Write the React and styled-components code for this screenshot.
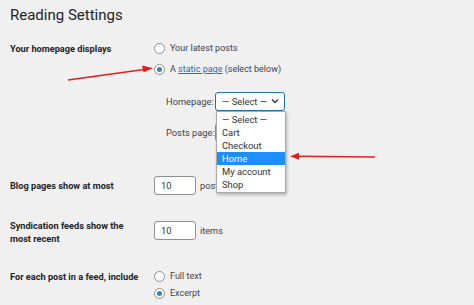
import React from 'react';
import styled, { createGlobalStyle } from 'styled-components';

const GlobalStyle = createGlobalStyle`
  html, body {
    margin: 0;
    padding: 0;
    background: #f0f0f1;
  }
  body {
    font-family: Roboto, "Liberation Sans", sans-serif;
    color: #1d2327;
    width: 474px;
    height: 305px;
    overflow: hidden;
  }
`;

const Page = styled.div`
  position: relative;
  width: 474px;
  height: 305px;
  padding: 3px 0 0 10px;
  box-sizing: border-box;
`;

const Title = styled.h1`
  margin: 0;
  font-size: 15px;
  font-weight: 400;
  line-height: 24px;
  color: #1d2327;
`;

const Row = styled.div`
  display: flex;
  align-items: flex-start;
  margin-top: ${p => p.$gap}px;
`;

const Label = styled.div`
  width: 144px;
  flex-shrink: 0;
  font-size: 9.2px;
  font-weight: 700;
  line-height: ${p => p.$lh || 21}px;
  color: #1d2327;
`;

const Field = styled.div`
  display: flex;
  flex-direction: column;
`;

const Option = styled.label`
  display: flex;
  align-items: center;
  gap: 5px;
  height: ${p => p.$h || 21}px;
  font-size: 9px;
  color: #3c434a;
  white-space: nowrap;
`;

const Radio = styled.span`
  width: 11px;
  height: 11px;
  border-radius: 50%;
  border: 1px solid #8c8f94;
  background: #fff;
  box-sizing: border-box;
  display: flex;
  align-items: center;
  justify-content: center;
  &::after {
    content: '';
    width: 5px;
    height: 5px;
    border-radius: 50%;
    background: ${p => (p.$checked ? '#3582c4' : 'transparent')};
  }
`;

const Link = styled.a`
  color: #2271b1;
  text-decoration: underline;
`;

const SubFields = styled.div`
  position: relative;
  display: flex;
  flex-direction: column;
  gap: 12px;
  margin-top: 12px;
  padding-left: 12px;
`;

const SubRow = styled.div`
  display: flex;
  align-items: center;
  gap: 2px;
  font-size: 9.3px;
  color: #3c434a;
  white-space: nowrap;
`;

const SubLabel = styled.span`
  width: 47px;
`;

const Select = styled.div`
  width: 70px;
  height: 19px;
  box-sizing: border-box;
  border: 1px solid ${p => (p.$focus ? '#2271b1' : '#8c8f94')};
  border-radius: 3px;
  background: #fff;
  display: flex;
  align-items: center;
  justify-content: space-between;
  padding: 0 5px 0 6px;
  font-size: 9.4px;
  color: #2c3338;
  white-space: nowrap;
`;

const Menu = styled.ul`
  position: absolute;
  left: 62px;
  top: 19px;
  width: 70px;
  margin: 0;
  padding: 1px 0;
  list-style: none;
  background: #fff;
  border: 1px solid #a7aaad;
  box-shadow: 1px 2px 3px rgba(0, 0, 0, 0.25);
  box-sizing: border-box;
  z-index: 2;
`;

const MenuItem = styled.li`
  height: 13px;
  line-height: 13px;
  padding-left: 5px;
  font-size: 9.4px;
  white-space: nowrap;
  color: ${p => (p.$active ? '#fff' : '#2c3338')};
  background: ${p => (p.$active ? '#1e8fff' : 'transparent')};
`;

const InputRow = styled.div`
  display: flex;
  align-items: center;
  gap: 4px;
  font-size: 9.2px;
  color: #3c434a;
  padding-top: ${p => p.$pt || 0}px;
`;

const NumberInput = styled.div`
  width: 42px;
  height: 19px;
  box-sizing: border-box;
  border: 1px solid #8c8f94;
  border-radius: 3px;
  background: #fff;
  padding-left: 6px;
  display: flex;
  align-items: center;
  font-size: 9.4px;
  color: #2c3338;
`;

const Arrows = styled.svg`
  position: absolute;
  left: 0;
  top: 0;
  pointer-events: none;
  z-index: 3;
`;

const Chevron = () => (
  <svg width="8" height="6" viewBox="0 0 8 6">
    <path d="M1 1.5 L4 4.5 L7 1.5" fill="none" stroke="#2c3338" strokeWidth="1.3" />
  </svg>
);

const pages = ['— Select —', 'Cart', 'Checkout', 'Home', 'My account', 'Shop'];

export default function App() {
  return (
    <>
      <GlobalStyle />
      <Page>
        <Title>Reading Settings</Title>

        <Row $gap={10.5}>
          <Label>Your homepage displays</Label>
          <Field>
            <Option>
              <Radio />
              Your latest posts
            </Option>
            <Option>
              <Radio $checked />
              <span>
                A <Link>static page</Link> (select below)
              </span>
            </Option>
            <SubFields>
              <SubRow>
                <SubLabel>Homepage:</SubLabel>
                <Select $focus>
                  — Select — <Chevron />
                </Select>
              </SubRow>
              <SubRow>
                <SubLabel>Posts page:</SubLabel>
                <Select>
                  — Select — <Chevron />
                </Select>
              </SubRow>
              <Menu>
                {pages.map(p => (
                  <MenuItem key={p} $active={p === 'Home'}>
                    {p}
                  </MenuItem>
                ))}
              </Menu>
            </SubFields>
          </Field>
        </Row>

        <Row $gap={34}>
          <Label $lh={19}>Blog pages show at most</Label>
          <InputRow>
            <NumberInput>10</NumberInput>
            posts
          </InputRow>
        </Row>

        <Row $gap={24}>
          <Label $lh={13}>
            Syndication feeds show the
            <br />
            most recent
          </Label>
          <InputRow $pt={2}>
            <NumberInput>10</NumberInput>
            items
          </InputRow>
        </Row>

        <Row $gap={23}>
          <Label $lh={17}>For each post in a feed, include</Label>
          <Field>
            <Option $h={17}>
              <Radio />
              Full text
            </Option>
            <Option $h={17}>
              <Radio $checked />
              Excerpt
            </Option>
          </Field>
        </Row>

        <Arrows width="474" height="305" viewBox="0 0 474 305">
          <line x1="68" y1="80" x2="144" y2="69.5" stroke="#e02020" strokeWidth="1.6" />
          <path d="M153 68 L142 65.5 L143.5 72.5 Z" fill="#e02020" />
          <line x1="375" y1="157" x2="298" y2="156.3" stroke="#e02020" strokeWidth="1.6" />
          <path d="M290 156.2 L299 152.8 L299 159.8 Z" fill="#e02020" />
        </Arrows>
      </Page>
    </>
  );
}
